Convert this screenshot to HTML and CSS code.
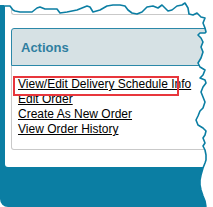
FILE: index.html
```html
<!DOCTYPE html>
<html lang="en">
  <head>
    <meta charset="UTF-8" />
    <meta name="viewport" content="width=device-width, initial-scale=1.0" />
    <title>Actions</title>
    <link rel="stylesheet" href="styles.css">
  </head>
  <body>
    <div class="frame">
      <div class="sheet">
        <div class="prev"></div>

        <!-- Actions panel -->
        <div class="panel">
          <div class="panel-head">Actions</div>
          <div class="panel-body">
            <a href="#">View/Edit Delivery Schedule Info</a>
            <a href="#">Edit Order</a>
            <a href="#">Create As New Order</a>
            <a href="#">View Order History</a>
          </div>
        </div>
      </div>
    </div>

    <!-- highlight around the first link -->
    <div class="highlight"></div>

    <!-- torn edge of the screenshot -->
    <svg class="tear" width="213" height="207" viewBox="0 0 213 207">
      <path class="tear-fill" d="M0,0 L0,5 L4,5 L4,6 L10,6 L13,10 L15,11 L20,12 L32,12 L37,8 L40,7 L45,9 L57,9 L60,13 L67,12 L72,11 L77,10 L82,8 L87,6 L90,7 L93,12 L100,10 L107,6 L113,5 L120,5 L125,6 L128,10 L132,13 L137,14 L142,12 L147,7 L153,6 L158,8 L162,5 L165,8 L168,11 L172,10 L177,6 L182,5 L185,3 L188,8 L189,14 L193,15 L197,13 L201,17 L205,18 L203,23 L205,28 L206,32 L205,33 L200,33 L198,35 L201,38 L203,42 L201,47 L203,52 L201,58 L198,63 L200,67 L205,70 L203,75 L200,78 L205,80 L206,83 L203,87 L201,92 L203,97 L205,102 L204,105 L203,108 L200,111 L198,116 L196,120 L198,125 L203,128 L206,131 L205,135 L203,138 L205,143 L203,146 L205,150 L206,155 L206,160 L205,163 L203,168 L201,175 L200,180 L200,185 L201,190 L203,196 L205,201 L206,207 L213,207 L213,0 Z" />
      <polyline class="tear-line" points="4,6 10,6 13,10 15,11 20,12 32,12 37,8 40,7 45,9 57,9 60,13 67,12 72,11 77,10 82,8 87,6 90,7 93,12 100,10 107,6 113,5 120,5 125,6 128,10 132,13 137,14 142,12 147,7 153,6 158,8 162,5 165,8 168,11 172,10 177,6 182,5 185,3 188,8 189,14 193,15 197,13 201,17 205,18 203,23 205,28 206,32 205,33 200,33 198,35 201,38 203,42 201,47 203,52 201,58 198,63 200,67 205,70 203,75 200,78 205,80 206,83 203,87 201,92 203,97 205,102 204,105 203,108 200,111 198,116 196,120 198,125 203,128 206,131 205,135 203,138 205,143 203,146 205,150 206,155 206,160 205,163 203,168 201,175 200,180 200,185 201,190 203,196 205,201 206,207" />
    </svg>
  </body>
</html>
```

FILE: styles.css
```css
body {
  margin: 0;
  background-color: #fff;
  font-family: "Liberation Sans", Arial, sans-serif;
  position: relative;
  overflow: hidden;
  height: 207px;
}

.frame {
  margin-top: 5px;
  height: 202px;
  padding-left: 5px;
  background-color: #0b7ea3;
  border-bottom-left-radius: 8px;
}

.sheet {
  height: 162px;
  padding-left: 6px;
  background-color: #fff;
  border-bottom-left-radius: 3px;
  display: flex;
  flex-direction: column;
}

.prev {
  height: 9px;
  border-left: 1px solid #c9c9c9;
  border-bottom: 1px solid #c9c9c9;
  border-bottom-left-radius: 3px;
}

.panel {
  margin-top: 13px;
}

.panel-head {
  height: 36px;
  display: flex;
  align-items: center;
  padding-left: 9px;
  background-color: #d6e1e4;
  border: 1px solid #2b88a8;
  border-radius: 3px 3px 0 0;
  color: #2f7ea0;
  font-size: 13px;
  font-weight: bold;
}

.panel-body {
  padding: 11px 6px 12px;
  border: 1px solid #c9c9c9;
  border-top: 0;
  border-radius: 0 0 3px 3px;
}

.panel-body a {
  display: block;
  color: #000;
  text-decoration: underline;
  font-size: 12px;
  line-height: 15px;
  white-space: nowrap;
}

/* 강조 박스 */
.highlight {
  position: absolute;
  left: 13px;
  top: 76px;
  width: 166px;
  height: 20px;
  box-sizing: border-box;
  border: 2px solid #e8363c;
}

.tear {
  position: absolute;
  left: 0;
  top: 0;
}

.tear-fill {
  fill: #fff;
}

.tear-line {
  fill: none;
  stroke: #0b7ea3;
  stroke-width: 1.6;
  stroke-linejoin: round;
}
```
